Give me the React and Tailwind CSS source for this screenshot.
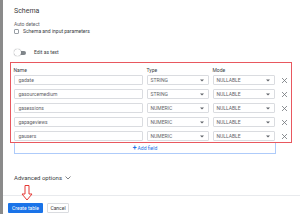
import React from "react";

const fields = [
  { name: "gadate", type: "STRING" },
  { name: "gasourcemedium", type: "STRING" },
  { name: "gasessions", type: "NUMERIC" },
  { name: "gapageviews", type: "NUMERIC" },
  { name: "gausers", type: "NUMERIC" },
];

const Caret = () => (
  <svg width="4" height="3" viewBox="0 0 4 3" className="shrink-0">
    <path d="M0 0.5 L4 0.5 L2 2.5 Z" fill="#5f6368" />
  </svg>
);

const Cross = () => (
  <svg width="7" height="7" viewBox="0 0 7 7">
    <path d="M1 1 L6 6 M6 1 L1 6" stroke="#70757a" strokeWidth="0.8" />
  </svg>
);

const FieldRow = ({ field }) => (
  <div className="flex items-center h-[10px] mb-[4px]">
    <div className="w-[129px] h-full border border-[#dadce0] rounded-[1px] flex items-center pl-[4px] text-[#5f6368]">
      {field.name}
    </div>
    <div className="w-[62px] h-full ml-[4px] border border-[#dadce0] rounded-[1px] flex items-center justify-between pl-[3px] pr-[4px] text-[#5f6368]">
      <span>{field.type}</span>
      <Caret />
    </div>
    <div className="w-[62px] h-full ml-[4px] border border-[#dadce0] rounded-[1px] flex items-center justify-between pl-[3px] pr-[4px] text-[#5f6368]">
      <span>NULLABLE</span>
      <Caret />
    </div>
    <div className="ml-[6px] flex items-center">
      <Cross />
    </div>
  </div>
);

export default function App() {
  return (
    <div
      className="w-[300px] h-[214px] flex bg-white overflow-hidden text-[5px] leading-none text-[#3c4043]"
      style={{ fontFamily: "Roboto, 'Liberation Sans', sans-serif" }}
    >
      <div className="w-[3px] h-full bg-[#8a8a8a] shrink-0" />
      <div className="relative flex-1 flex flex-col">
        <div className="pl-[11px] pt-[8px]">
          <div className="text-[7px] text-[#3c4043] h-[7px]">Schema</div>
          <div className="mt-[7px] text-[#5f6368]">Auto detect</div>
          <div className="mt-[2px] flex items-center">
            <div className="w-[5px] h-[5px] border border-[#9aa0a6] rounded-[1px]" />
            <span className="ml-[4px] text-[#3c4043]">Schema and input parameters</span>
          </div>
          <div className="mt-[15px] flex items-center h-[7px]">
            <div className="relative w-[13px] h-[7px] flex items-center">
              <div className="w-[12px] h-[4px] rounded-full bg-[#80868b]" />
              <div className="absolute left-0 w-[7px] h-[7px] rounded-full bg-white shadow-[0_0_1px_#5f6368]" />
            </div>
            <span className="ml-[7px] text-[#3c4043]">Edit as text</span>
          </div>
        </div>
        <div className="ml-[7px] mt-[6px] w-[282px] h-[81px] border-[1.5px] border-[#e8585f] pl-[2.5px] pt-[5px]">
          <div className="flex h-[5px] mb-[2px] text-[#3c4043]">
            <span className="w-[133px]">Name</span>
            <span className="w-[66px]">Type</span>
            <span>Mode</span>
          </div>
          {fields.map((f) => (
            <FieldRow key={f.name} field={f} />
          ))}
        </div>
        <div className="ml-[11px] w-[262px] h-[11px] border border-[#aecbfa] border-t-0 flex items-center justify-center text-[#1a73e8]">
          <span className="text-[7px] font-bold mr-[1px] leading-none">+</span>
          <span>Add field</span>
        </div>
        <div className="ml-[11px] mt-[21px] flex items-center text-[6px] text-[#3c4043]">
          <span>Advanced options</span>
          <svg width="6" height="4" viewBox="0 0 6 4" className="ml-[3px]">
            <path d="M0.5 0.5 L3 3 L5.5 0.5" stroke="#5f6368" strokeWidth="0.8" fill="none" />
          </svg>
        </div>
        <div className="mt-[14px] h-[1px] bg-[#e8eaed]" />
        <div className="mt-[7px] ml-[5px] flex items-center">
          <div className="w-[35px] h-[10px] bg-[#1a73e8] rounded-[1px] flex items-center justify-center text-white">
            Create table
          </div>
          <div className="ml-[4px] w-[22px] h-[10px] border border-[#dadce0] rounded-[1px] flex items-center justify-center text-[#3c4043]">
            Cancel
          </div>
        </div>
        <svg
          width="12"
          height="16"
          viewBox="0 0 12 16"
          className="absolute left-[18px] top-[185px]"
        >
          <path
            d="M4 0.5 L8 0.5 L8 9 L11 9 L6 15 L1 9 L4 9 Z"
            fill="white"
            stroke="#e53935"
            strokeWidth="1"
          />
        </svg>
      </div>
    </div>
  );
}
